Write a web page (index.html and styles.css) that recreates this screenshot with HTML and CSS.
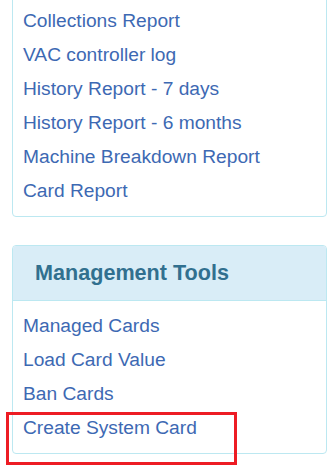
FILE: index.html
```html
<!DOCTYPE html>
<html lang="en">
<head>
    <meta charset="UTF-8">
    <meta name="viewport" content="width=device-width, initial-scale=1.0">
    <title>Reports</title>
    <link rel="stylesheet" href="styles.css">
</head>
<body>
    <div class="page">
        <div class="panel panel-top">
            <ul class="link-list">
                <li><a href="#">Collections Report</a></li>
                <li><a href="#">VAC controller log</a></li>
                <li><a href="#">History Report - 7 days</a></li>
                <li><a href="#">History Report - 6 months</a></li>
                <li><a href="#">Machine Breakdown Report</a></li>
                <li><a href="#">Card Report</a></li>
            </ul>
        </div>

        <div class="panel">
            <div class="panel-heading">
                <h3>Management Tools</h3>
            </div>
            <ul class="link-list">
                <li><a href="#">Managed Cards</a></li>
                <li><a href="#">Load Card Value</a></li>
                <li><a href="#">Ban Cards</a></li>
                <li class="marked"><a href="#">Create System Card</a><span class="mark-box"></span></li>
            </ul>
        </div>
    </div>
</body>
</html>
```

FILE: styles.css
```css
body {
    margin: 0;
    padding: 0;
    background: #fff;
    font-family: "Liberation Sans", Arial, sans-serif;
}
.page {
    padding-left: 12px;
}
.panel {
    width: 315px;
    box-sizing: border-box;
    border: 1px solid #bce8f1;
    border-radius: 4px;
    background: #fff;
    margin-bottom: 28px;
}
.panel-top {
    margin-top: -5px;
    border-top-left-radius: 0;
    border-top-right-radius: 0;
}
.panel-heading {
    background-color: #d9edf7;
    border-bottom: 1px solid #bce8f1;
    border-radius: 3px 3px 0 0;
    height: 54px;
    display: flex;
    align-items: center;
    padding-left: 22px;
}
.panel-heading h3 {
    margin: 0;
    font-size: 21.6px;
    font-weight: bold;
    color: #31708f;
}
.link-list {
    list-style: none;
    margin: 0;
    padding: 8px 10px 8px 10px;
}
.link-list li {
    line-height: 34px;
    font-size: 19.2px;
}
.link-list a {
    color: #3d69b3;
    text-decoration: none;
}
.marked {
    position: relative;
}
.mark-box {
    position: absolute;
    left: -17px;
    top: 1px;
    width: 231px;
    height: 53px;
    box-sizing: border-box;
    border: 3px solid #ed1c24;
}
```
